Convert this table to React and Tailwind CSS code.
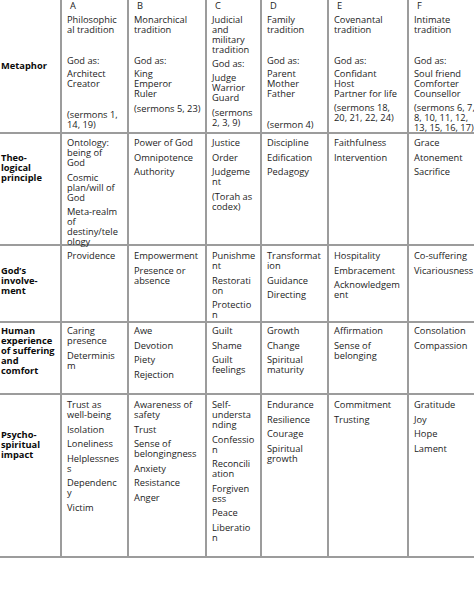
import React from "react";

// metaphor row: spacing differs per cell, so each block carries its own margin
const metaphor = [
  [
    { t: ["A"], c: "pl-[3px]" },
    { t: ["Philosophic", "al tradition"], c: "mt-[4px]" },
    { t: ["God as:"], c: "mt-[21px]" },
    { t: ["Architect", "Creator"], c: "mt-[3px]" },
    { t: ["(sermons 1,", "14, 19)"], c: "mt-[21px]" },
  ],
  [
    { t: ["B"], c: "pl-[3px]" },
    { t: ["Monarchical", "tradition"], c: "mt-[4px]" },
    { t: ["God as:"], c: "mt-[21px]" },
    { t: ["King", "Emperor", "Ruler"], c: "mt-[3px]" },
    { t: ["(sermons 5, 23)"], c: "mt-[5px]" },
  ],
  [
    { t: ["C"], c: "pl-[3px]" },
    { t: ["Judicial", "and", "military", "tradition"], c: "mt-[4px]" },
    { t: ["God as:"], c: "mt-[3.5px]" },
    { t: ["Judge", "Warrior", "Guard"], c: "mt-[4.5px]" },
    { t: ["(sermons", "2, 3, 9)"], c: "mt-[5px]" },
  ],
  [
    { t: ["D"], c: "pl-[3px]" },
    { t: ["Family", "tradition"], c: "mt-[4px]" },
    { t: ["God as:"], c: "mt-[21px]" },
    { t: ["Parent", "Mother", "Father"], c: "mt-[3px]" },
    { t: ["(sermon 4)"], c: "mt-[21px]" },
  ],
  [
    { t: ["E"], c: "pl-[3px]" },
    { t: ["Covenantal", "tradition"], c: "mt-[4px]" },
    { t: ["God as:"], c: "mt-[21px]" },
    { t: ["Confidant", "Host", "Partner for life"], c: "mt-[3px]" },
    { t: ["(sermons 18,", "20, 21, 22, 24)"], c: "mt-[4px]" },
  ],
  [
    { t: ["F"], c: "pl-[3px]" },
    { t: ["Intimate", "tradition"], c: "mt-[4px]" },
    { t: ["God as:"], c: "mt-[21px]" },
    { t: ["Soul friend", "Comforter", "Counsellor"], c: "mt-[3px]" },
    { t: ["(sermons 6, 7,", "8, 10, 11, 12,", "13, 15, 16, 17)"], c: "mt-[4px]" },
  ],
];

const rows = [
  {
    label: ["Theo-", "logical", "principle"],
    labelPad: "pt-[19px]",
    pad: "pt-[4px]",
    cells: [
      [["Ontology:", "being of", "God"], ["Cosmic", "plan/will of", "God"], ["Meta-realm", "of", "destiny/tele", "ology"]],
      [["Power of God"], ["Omnipotence"], ["Authority"]],
      [["Justice"], ["Order"], ["Judgeme", "nt"], ["(Torah as", "codex)"]],
      [["Discipline"], ["Edification"], ["Pedagogy"]],
      [["Faithfulness"], ["Intervention"]],
      [["Grace"], ["Atonement"], ["Sacrifice"]],
    ],
  },
  {
    label: ["God’s", "involve-", "ment"],
    labelPad: "pt-[20px]",
    pad: "pt-[5px]",
    cells: [
      [["Providence"]],
      [["Empowerment"], ["Presence or", "absence"]],
      [["Punishme", "nt"], ["Restorati", "on"], ["Protectio", "n"]],
      [["Transformat", "ion"], ["Guidance"], ["Directing"]],
      [["Hospitality"], ["Embracement"], ["Acknowledgem", "ent"]],
      [["Co-suffering"], ["Vicariousness"]],
    ],
  },
  {
    label: ["Human", "experience", "of suffering", "and", "comfort"],
    labelPad: "pt-[3px]",
    pad: "pt-[3px]",
    cells: [
      [["Caring", "presence"], ["Determinis", "m"]],
      [["Awe"], ["Devotion"], ["Piety"], ["Rejection"]],
      [["Guilt"], ["Shame"], ["Guilt", "feelings"]],
      [["Growth"], ["Change"], ["Spiritual", "maturity"]],
      [["Affirmation"], ["Sense of", "belonging"]],
      [["Consolation"], ["Compassion"]],
    ],
  },
  {
    label: ["Psycho-", "spiritual", "impact"],
    labelPad: "pt-[35px]",
    pad: "pt-[5px]",
    cells: [
      [["Trust as", "well-being"], ["Isolation"], ["Loneliness"], ["Helplessnes", "s"], ["Dependenc", "y"], ["Victim"]],
      [["Awareness of", "safety"], ["Trust"], ["Sense of", "belongingness"], ["Anxiety"], ["Resistance"], ["Anger"]],
      [["Self-", "understa", "nding"], ["Confessio", "n"], ["Reconcili", "ation"], ["Forgiven", "ess"], ["Peace"], ["Liberatio", "n"]],
      [["Endurance"], ["Resilience"], ["Courage"], ["Spiritual", "growth"]],
      [["Commitment"], ["Trusting"]],
      [["Gratitude"], ["Joy"], ["Hope"], ["Lament"]],
    ],
  },
];

const Lines = ({ lines }) => (
  <div>
    {lines.map((l, i) => (
      <div key={i} className="whitespace-nowrap">
        {l}
      </div>
    ))}
  </div>
);

const Label = ({ lines, className }) => (
  <div className={`border-b-2 border-[#9c9c9c] pl-px font-bold text-[#0a0a0a] ${className}`}>
    <Lines lines={lines} />
  </div>
);

export default function App() {
  return (
    <div className="w-[474px] h-[601px] overflow-hidden bg-white font-['Open_Sans',sans-serif] text-[9.3px] leading-[10px] text-[#1c1c1c]">
      <div className="grid grid-cols-[60px_67px_78px_55px_67px_80px_1fr] grid-rows-[134px_112px_77px_72px_163px]">
        <Label lines={["Metaphor"]} className="flex items-center" />
        {metaphor.map((cell, i) => (
          <div key={i} className="border-b-2 border-l-2 border-[#9c9c9c] pl-[5px] pt-px flex flex-col">
            {cell.map((b, j) => (
              <div key={j} className={b.c}>
                <Lines lines={b.t} />
              </div>
            ))}
          </div>
        ))}

        {rows.map((row, r) => (
          <React.Fragment key={r}>
            <Label lines={row.label} className={row.labelPad} />
            {row.cells.map((cell, i) => (
              <div
                key={i}
                className={`border-b-2 border-l-2 border-[#9c9c9c] pl-[5px] flex flex-col gap-[4.5px] ${row.pad}`}
              >
                {cell.map((b, j) => (
                  <Lines key={j} lines={b} />
                ))}
              </div>
            ))}
          </React.Fragment>
        ))}
      </div>
    </div>
  );
}
